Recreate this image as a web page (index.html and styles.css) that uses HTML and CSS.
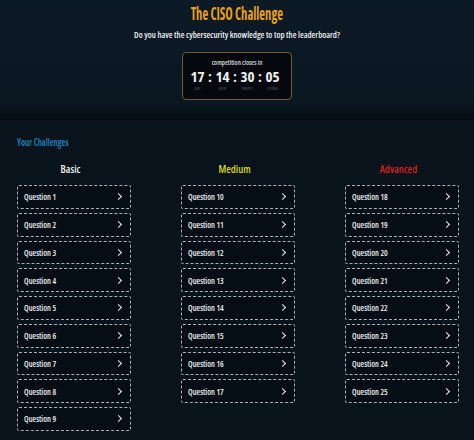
FILE: index.html
```html
<!DOCTYPE html>
<html>
<head>
<meta charset="utf-8">
<link rel="stylesheet" href="styles.css">
</head>
<body>
<header class="hero">
  <h1 class="title">The CISO Challenge</h1>
  <p class="subtitle">Do you have the cybersecurity knowledge to top the leaderboard?</p>
  <div class="countdown">
    <div class="cd-label">competition closes in</div>
    <div class="cd-row">
      <div class="cd-unit"><span class="cd-num">17</span><span class="cd-cap">DAYS</span></div>
      <span class="cd-sep">:</span>
      <div class="cd-unit"><span class="cd-num">14</span><span class="cd-cap">HOURS</span></div>
      <span class="cd-sep">:</span>
      <div class="cd-unit"><span class="cd-num">30</span><span class="cd-cap">MINUTES</span></div>
      <span class="cd-sep">:</span>
      <div class="cd-unit"><span class="cd-num">05</span><span class="cd-cap">SECONDS</span></div>
    </div>
  </div>
</header>
<main class="challenges">
  <h2 class="section-title">Your Challenges</h2>
  <div class="columns">
    <section class="col">
      <h3 class="level basic">Basic</h3>
      <a class="q">Question 1<span class="chev"></span></a>
      <a class="q">Question 2<span class="chev"></span></a>
      <a class="q">Question 3<span class="chev"></span></a>
      <a class="q">Question 4<span class="chev"></span></a>
      <a class="q">Question 5<span class="chev"></span></a>
      <a class="q">Question 6<span class="chev"></span></a>
      <a class="q">Question 7<span class="chev"></span></a>
      <a class="q">Question 8<span class="chev"></span></a>
      <a class="q">Question 9<span class="chev"></span></a>
    </section>
    <section class="col">
      <h3 class="level medium">Medium</h3>
      <a class="q">Question 10<span class="chev"></span></a>
      <a class="q">Question 11<span class="chev"></span></a>
      <a class="q">Question 12<span class="chev"></span></a>
      <a class="q">Question 13<span class="chev"></span></a>
      <a class="q">Question 14<span class="chev"></span></a>
      <a class="q">Question 15<span class="chev"></span></a>
      <a class="q">Question 16<span class="chev"></span></a>
      <a class="q">Question 17<span class="chev"></span></a>
    </section>
    <section class="col">
      <h3 class="level advanced">Advanced</h3>
      <a class="q">Question 18<span class="chev"></span></a>
      <a class="q">Question 19<span class="chev"></span></a>
      <a class="q">Question 20<span class="chev"></span></a>
      <a class="q">Question 21<span class="chev"></span></a>
      <a class="q">Question 22<span class="chev"></span></a>
      <a class="q">Question 23<span class="chev"></span></a>
      <a class="q">Question 24<span class="chev"></span></a>
      <a class="q">Question 25<span class="chev"></span></a>
    </section>
  </div>
</main>
</body>
</html>
```
FILE: styles.css
```css
* { box-sizing: border-box; }
html, body { margin: 0; padding: 0; }
body {
  background: #08131c;
  font-family: "Open Sans", "Roboto", sans-serif;
  font-stretch: 87.5%;
  color: #e6e9ec;
  width: 474px;
  height: 440px;
  overflow: hidden;
}
.hero {
  height: 120px;
  background: linear-gradient(#0c1a25, #0a1721 85%, #050b11);
  display: flex;
  flex-direction: column;
  align-items: center;
  padding-top: 3px;
}
.title {
  margin: 0;
  font-family: "Open Sans", sans-serif;
  font-stretch: 75%;
  font-weight: 700;
  font-size: 18.5px;
  line-height: 20px;
  color: #eaa01c;
  transform: scaleX(0.68);
}
.subtitle {
  margin: 6px 0 0;
  font-size: 8.65px;
  line-height: 12px;
  font-weight: 600;
  color: #eef0f2;
}
.countdown {
  margin-top: 11px;
  width: 110px;
  height: 48px;
  border: 1.5px solid #6b5e2c;
  border-radius: 4px;
  background: #05090d;
  display: flex;
  flex-direction: column;
  align-items: center;
  padding-top: 6px;
}
.cd-label {
  font-size: 6.6px;
  line-height: 8px;
  font-weight: 600;
  color: #d8dbde;
}
.cd-row {
  display: flex;
  align-items: flex-start;
  margin-top: 3px;
  margin-right: 4px;
}
.cd-unit {
  width: 19px;
  display: flex;
  flex-direction: column;
  align-items: center;
}
.cd-sep {
  width: 6px;
  text-align: center;
}
.cd-num, .cd-sep {
  font-family: "Open Sans", sans-serif;
  font-stretch: 75%;
  font-size: 15px;
  line-height: 13px;
  font-weight: 700;
  color: #eef0f2;
}
.cd-cap {
  margin-top: 3.5px;
  font-size: 3.3px;
  line-height: 4px;
  color: #56616b;
  white-space: nowrap;
}
.challenges {
  padding: 15px 15px 0 17px;
}
.section-title {
  margin: 0;
  font-family: "Open Sans", sans-serif;
  font-stretch: 75%;
  font-weight: 700;
  font-size: 11px;
  line-height: 14px;
  color: #1b78a8;
  transform: scaleX(0.76);
  transform-origin: left center;
}
.columns {
  display: flex;
  justify-content: space-between;
  margin-top: 13px;
}
.col {
  width: 114px;
  display: flex;
  flex-direction: column;
  gap: 4px;
}
.level {
  margin: 0 0 5px;
  text-align: center;
  font-size: 10.5px;
  line-height: 14px;
  font-weight: 600;
  padding-right: 7px;
}
.basic { color: #f1f1f1; }
.medium { color: #d4d41e; }
.advanced { color: #d71f1f; }
.q {
  height: 23.75px;
  border: 1px dashed #a9b0b8;
  border-radius: 2px;
  background: #060e15;
  display: flex;
  align-items: center;
  justify-content: space-between;
  padding: 0 7px 0 6px;
  font-size: 8.2px;
  font-weight: 600;
  color: #eceff1;
}
.chev {
  width: 5px;
  height: 5px;
  border-top: 1.3px solid #e8ebee;
  border-right: 1.3px solid #e8ebee;
  transform: rotate(45deg);
  margin-right: 2px;
}
```
